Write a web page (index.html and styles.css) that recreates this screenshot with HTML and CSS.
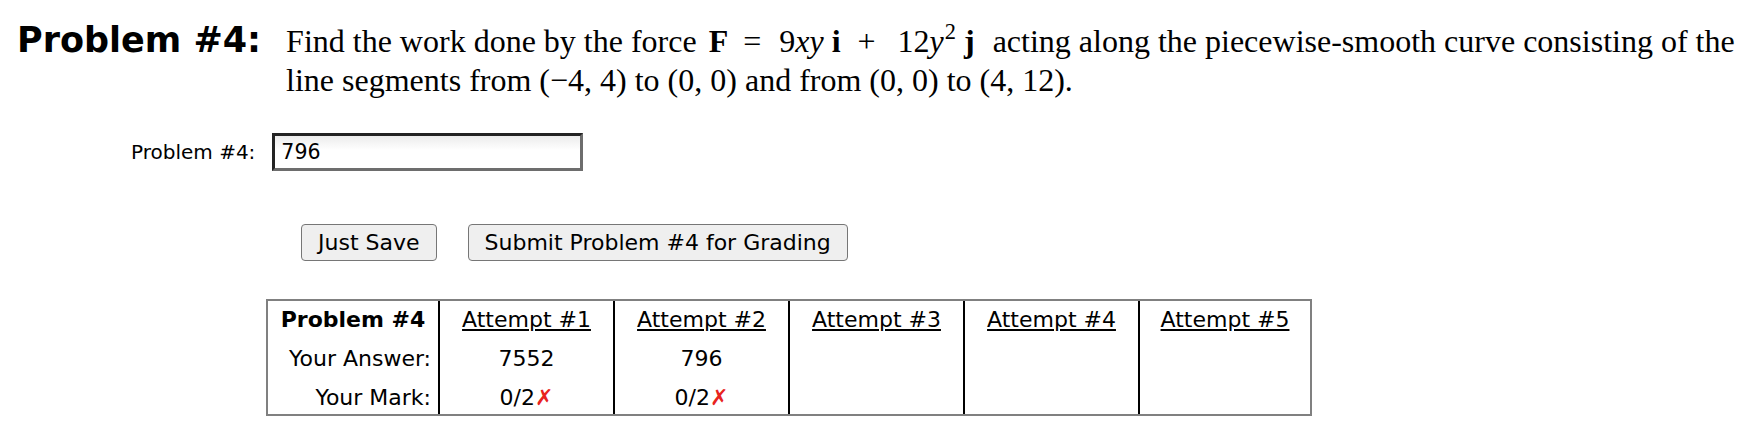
FILE: index.html
```html
<!DOCTYPE html>
<html lang="en">
<head>
<meta charset="utf-8">
<title>Problem #4</title>
<link rel="stylesheet" href="styles.css">
</head>
<body>
<div class="problem">
  <div class="problem-title">Problem #4:</div>
  <div class="problem-text">Find the work done by the force <span class="math"><b class="vec">F</b><span class="op eq">=</span>9<i>xy</i><b class="vec unit">i</b><span class="op plus">+</span>12<i>y</i><sup>2</sup><b class="vec unit last">j</b></span> acting along the piecewise-smooth curve consisting of the line segments from (−4, 4) to (0, 0) and from (0, 0) to (4, 12).</div>
</div>

<div class="answer-row">
  <label class="answer-label" for="ans">Problem #4:</label>
  <input class="answer-input" id="ans" type="text" value="796">
</div>

<div class="buttons">
  <button class="btn" type="button">Just Save</button>
  <button class="btn" type="button">Submit Problem #4 for Grading</button>
</div>

<table class="attempts">
  <tr class="head-row">
    <th class="first">Problem #4</th>
    <td class="att"><a href="#">Attempt #1</a></td>
    <td class="att"><a href="#">Attempt #2</a></td>
    <td class="att"><a href="#">Attempt #3</a></td>
    <td class="att"><a href="#">Attempt #4</a></td>
    <td class="att last"><a href="#">Attempt #5</a></td>
  </tr>
  <tr class="body-row">
    <td class="first label">Your Answer:</td>
    <td class="att">7552</td>
    <td class="att">796</td>
    <td class="att"></td>
    <td class="att"></td>
    <td class="att last"></td>
  </tr>
  <tr class="body-row">
    <td class="first label">Your Mark:</td>
    <td class="att">0/2<span class="wrong">✗</span></td>
    <td class="att">0/2<span class="wrong">✗</span></td>
    <td class="att"></td>
    <td class="att"></td>
    <td class="att last"></td>
  </tr>
</table>
</body>
</html>
```

FILE: styles.css
```css
html, body {
  background: #ffffff;
}
body {
  margin: 8px;
  color: #000;
  font-family: "DejaVu Sans", Verdana, sans-serif;
}

.problem {
  display: flex;
  align-items: baseline;
  padding: 13px 0 0 9px;
}
.problem-title {
  flex: none;
  font-size: 35px;
  font-weight: bold;
  line-height: 39px;
  margin-right: 25px;
}
.problem-text {
  flex: 1;
  font-family: "Liberation Serif", "Times New Roman", serif;
  font-size: 32px;
  line-height: 39px;
}
.math {
  margin-left: 4px;
}
.math i {
  font-style: italic;
}
.math .vec {
  font-weight: bold;
}
.math .unit {
  margin-left: 8px;
}
.math .unit.last {
  margin-left: 8px;
  margin-right: 10px;
}
.math .eq {
  margin: 0 18px 0 15px;
}
.math .plus {
  margin: 0 22px 0 17px;
}
.math sup {
  font-size: 70%;
  line-height: 0;
  vertical-align: 0.6em;
  margin-left: 1px;
}

.answer-row {
  display: flex;
  align-items: center;
  margin-top: 33px;
  padding-left: 123px;
}
.answer-label {
  font-size: 20px;
  margin-right: 17px;
}
.answer-input {
  box-sizing: border-box;
  width: 311px;
  height: 38px;
  margin: 0;
  padding: 0 6px;
  border: 3px solid;
  border-color: #232323 #6d6d6d #6d6d6d #232323;
  background: linear-gradient(#ececec, #ffffff 45%);
  font-family: "DejaVu Sans", Verdana, sans-serif;
  font-size: 20.5px;
  color: #000;
  outline: none;
}

.buttons {
  display: flex;
  gap: 31px;
  margin-top: 53px;
  padding-left: 293px;
}
.btn {
  box-sizing: border-box;
  height: 37px;
  margin: 0;
  padding: 0 16px;
  border: 1.5px solid #767676;
  border-radius: 4px;
  background: #efefef;
  font-family: "DejaVu Sans", Verdana, sans-serif;
  font-size: 22px;
  color: #000;
}

.attempts {
  margin: 38px 0 0 258px;
  width: 1046px;
  table-layout: fixed;
  border-collapse: separate;
  border-spacing: 0;
  border: 2px solid #808080;
  font-size: 22px;
}
.attempts th,
.attempts td {
  box-sizing: border-box;
  padding: 0 6px;
  text-align: center;
  vertical-align: middle;
  line-height: 26px;
}
.attempts .head-row th,
.attempts .head-row td {
  height: 36px;
  padding-top: 1px;
}
.attempts .body-row td {
  height: 38.5px;
  padding-top: 6px;
}
.attempts .first {
  width: 170px;
}
.attempts th.first {
  font-weight: bold;
}
.attempts .label {
  text-align: right;
  padding-right: 7px;
}
.attempts .att {
  width: 175px;
  border-left: 2px solid #000;
}
.attempts .att.last {
  width: 172px;
}
.attempts a {
  color: #000;
  text-decoration: underline;
}
.wrong {
  color: #e8231f;
}
```
